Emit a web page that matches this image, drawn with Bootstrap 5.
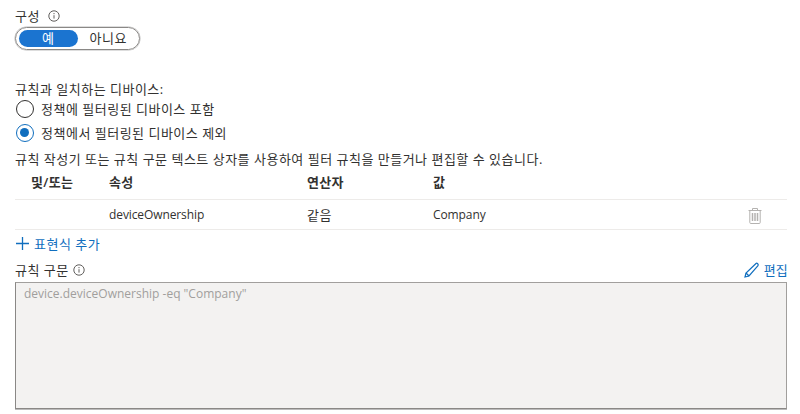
<!DOCTYPE html>
<html lang="ko"><head><meta charset="utf-8">
<link href="https://cdn.jsdelivr.net/npm/bootstrap@5.3.0/dist/css/bootstrap.min.css" rel="stylesheet">
<style>
html,body{height:414px;overflow:hidden}
body{font-family:"Open Sans","Noto Sans CJK KR",sans-serif;font-size:13px;letter-spacing:.5px;line-height:16px;color:#323130;background:#fff;padding:8px 13px 0 15px}
svg{display:block;flex:none}
.lat{font-size:12px;letter-spacing:-.1px}
.lat2{font-size:12px;letter-spacing:0}
.lbl{height:16px}
.tog{width:125px;height:23px;border:1px solid #8a8886;border-radius:12px;padding:2px;margin-top:3px;box-shadow:0 0 0 .5px #bbb}
.tog>span{height:17px;line-height:16px;text-align:center;border-radius:9px}
.tog>.on{width:59px;background:#1b74d0;color:#fff;margin-left:1px}
.tog>.off{width:60px;padding-left:2px}
.sect{margin-top:31px}
.rad{height:24px}
.rc{width:18px;height:18px;border-radius:50%;border:1.5px solid #323130;margin:0 7px 0 1px;flex:none}
.rc.sel{border-color:#106ebe;position:relative}
.rc.sel::after{content:"";position:absolute;left:3px;top:3px;width:9px;height:9px;border-radius:50%;background:#106ebe}
.desc{margin-top:6px;height:16px}
.grid-h,.grid-r{display:grid;grid-template-columns:94px 198px 126px 1fr 39px;align-items:center}
.grid-h{height:33px;font-weight:600;padding-bottom:2px;border-bottom:1px solid #edebe9;letter-spacing:.3px}
.grid-r{height:30px;padding-top:1px;border-bottom:1px solid #edebe9}
.grid-h>:first-child{padding-left:16px}
.add{height:27px;color:#106ebe}
.rl{margin-top:5px;height:16px}
.edt{color:#106ebe;margin-right:-1px;letter-spacing:.2px}
.ta{height:127px;margin-top:4px;background:#f3f2f1;border:1px solid #a19f9d;border-bottom-color:#8a8886;border-left-color:#8a8886;padding:2px 8px;color:#a19f9d;box-shadow:0 1px 0 #bbb}
</style></head><body>
<div class="lbl d-flex align-items-center gap-2"><span>구성</span>
<svg width="12" height="12" viewBox="0 0 12 12" fill="none" stroke="#605e5c"><circle cx="6" cy="6" r="5.2"/><path d="M6 5.2v3.4M6 3v1.2"/></svg></div>
<div class="tog d-flex align-items-center"><span class="on">예</span><span class="off">아니요</span></div>
<div class="sect lbl">규칙과 일치하는 디바이스:</div>
<div class="rad d-flex align-items-center"><span class="rc"></span><span>정책에 필터링된 디바이스 포함</span></div>
<div class="rad d-flex align-items-center"><span class="rc sel"></span><span>정책에서 필터링된 디바이스 제외</span></div>
<div class="desc">규칙 작성기 또는 규칙 구문 텍스트 상자를 사용하여 필터 규칙을 만들거나 편집할 수 있습니다.</div>
<div class="grid-h"><span>및/또는</span><span>속성</span><span>연산자</span><span>값</span><span></span></div>
<div class="grid-r"><span></span><span class="lat">deviceOwnership</span><span>같음</span><span class="lat">Company</span>
<svg width="14" height="17" viewBox="0 0 14 17" fill="none" stroke="#b4b2b0"><path d="M.5 3.500h13M4.500 3.500V1.500h5v2M1.800 3.500v12a1 1 0 0 0 1 1h8.400a1 1 0 0 0 1-1v-12"/><path d="M4.500 6v8M7 6v8M9.500 6v8" stroke-width="1.500"/></svg></div>
<div class="add d-flex align-items-center gap-1"><svg width="15" height="15" viewBox="0 0 15 15" stroke="#106ebe" stroke-width="1.300"><path d="M7.500 1v13M1 7.500h13"/></svg><span>표현식 추가</span></div>
<div class="rl d-flex justify-content-between align-items-center">
<div class="d-flex align-items-center gap-1"><span>규칙 구문</span><svg width="12" height="12" viewBox="0 0 12 12" fill="none" stroke="#605e5c"><circle cx="6" cy="6" r="5.2"/><path d="M6 5.200v3.400M6 3v1.200"/></svg></div>
<div class="edt d-flex align-items-center gap-1"><svg width="16" height="16" viewBox="0 0 16 16" fill="none" stroke="#106ebe" stroke-width="1.200"><path d="M1 15l1-4L12 1.500c1-.8 2.800.8 2 2.200L5 14z"/><path d="M2 11l3 3"/></svg><span>편집</span></div></div>
<div class="ta"><span class="lat2">device.deviceOwnership -eq "Company"</span></div>
</body></html>
